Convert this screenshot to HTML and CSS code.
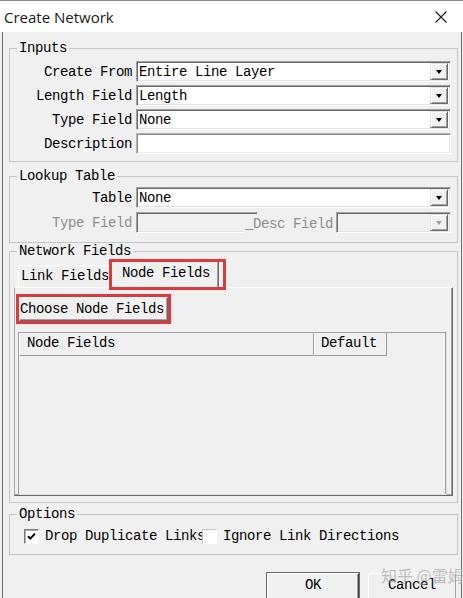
FILE: index.html
```html
<!DOCTYPE html>
<html lang="en">
<head>
    <meta charset="UTF-8">
    <title>Create Network</title>
    <link rel="stylesheet" href="styles.css">
</head>
<body>

<div class="window">
    <!-- Title bar -->
    <div class="titlebar">
        <span class="title">Create Network</span>
        <svg class="close" width="12" height="12" viewBox="0 0 12 12">
            <path d="M0.5 0.5L11.5 11.5M11.5 0.5L0.5 11.5" stroke="#1a1a1a" stroke-width="1.1" fill="none"/>
        </svg>
    </div>

    <div class="client">
        <!-- Inputs -->
        <fieldset class="group">
            <legend>Inputs</legend>
            <div class="field-grid inputs-grid">
                <label class="field-label">Create From</label>
                <div class="combo"><span class="combo-value">Entire Line Layer</span><span class="drop"></span></div>

                <label class="field-label">Length Field</label>
                <div class="combo"><span class="combo-value">Length</span><span class="drop"></span></div>

                <label class="field-label">Type Field</label>
                <div class="combo"><span class="combo-value">None</span><span class="drop"></span></div>

                <label class="field-label">Description</label>
                <div class="textbox"></div>
            </div>
        </fieldset>

        <!-- Lookup Table -->
        <fieldset class="group lookup">
            <legend>Lookup Table</legend>
            <div class="field-grid lookup-grid">
                <label class="field-label">Table</label>
                <div class="combo"><span class="combo-value">None</span><span class="drop"></span></div>

                <label class="field-label disabled">Type Field</label>
                <div class="split-row">
                    <div class="combo disabled short"></div>
                    <label class="field-label disabled desc-label"><span class="mnemonic">_</span>Desc Field</label>
                    <div class="combo disabled grow"><span class="combo-value"></span><span class="drop"></span></div>
                </div>
            </div>
        </fieldset>

        <!-- Network Fields -->
        <fieldset class="group network">
            <legend>Network Fields</legend>
            <div class="net">
                <div class="tab-strip">
                    <div class="tab">Link Fields</div>
                    <div class="tab selected">Node Fields</div>
                </div>
                <div class="tab-panel">
                    <button class="btn choose" type="button">Choose Node Fields</button>
                    <div class="listview">
                        <div class="list-header">
                            <div class="col-head col-name">Node Fields</div>
                            <div class="col-head col-default">Default</div>
                        </div>
                    </div>
                </div>
            </div>
        </fieldset>

        <!-- Options -->
        <fieldset class="group options">
            <legend>Options</legend>
            <div class="check-row">
                <span class="checkbox">
                    <svg width="9" height="9" viewBox="0 0 9 9"><path d="M1 4.2L3.3 6.6L8 1.6" stroke="#000" stroke-width="2" fill="none"/></svg>
                </span>
                <span class="check-label">Drop Duplicate Links</span>
                <span class="checkbox overlap"></span>
                <span class="check-label">Ignore Link Directions</span>
            </div>
        </fieldset>

        <div class="dialog-buttons">
            <button class="btn default" type="button">OK</button>
            <button class="btn" type="button">Cancel</button>
        </div>
    </div>

    <div class="watermark">知乎 @雷姆</div>
</div>

</body>
</html>
```

FILE: styles.css
```css
* {
    box-sizing: border-box;
}
body {
    margin: 0;
    background: #f0f0f0;
    font-family: "Liberation Mono", "DejaVu Sans Mono", monospace;
    font-size: 14px;
    letter-spacing: -0.4px;
    color: #000;
}
.window {
    position: relative;
    width: 463px;
    height: 598px;
    overflow: hidden;
}

/* title bar */
.titlebar {
    height: 32px;
    background: #fff;
    border-top: 1px solid #8a8a8a;
    display: flex;
    align-items: center;
    justify-content: space-between;
    padding: 0 16px 0 4px;
}
.title {
    font-family: "Open Sans", "Noto Sans", sans-serif;
    font-size: 15px;
    letter-spacing: 0;
    color: #1a1a1a;
}
.close {
    display: block;
}

.client {
    height: 566px;
    margin: 0 1px 0 2px;
    border-left: 1px solid #707070;
    border-right: 1px solid #707070;
    padding: 9px 3px 0 6px;
}

/* group boxes */
.group {
    margin: 0;
    padding: 0;
    min-width: 0;
    border: 1px solid #c4c4c4;
}
.group legend {
    margin-left: 7px;
    padding: 0 2px;
    line-height: 15px;
}
.lookup {
    margin-top: 7px;
}
.network {
    margin-top: 1px;
}
.options {
    margin-top: 4px;
}

.field-grid {
    display: grid;
    grid-template-columns: 122px 1fr;
    column-gap: 4px;
    align-items: center;
}
.inputs-grid {
    padding: 5px 6px 7px 0;
    row-gap: 3px;
    grid-auto-rows: 21px;
}
.lookup-grid {
    padding: 3px 6px 9px 0;
    row-gap: 4px;
    grid-auto-rows: 21px;
}
.field-label {
    text-align: right;
    white-space: nowrap;
}
.field-label.disabled {
    color: #8d8d8d;
}

/* combo boxes and text boxes */
.combo,
.textbox {
    height: 21px;
    background: #fff;
    border: 1px solid;
    border-color: #a0a0a0 #fff #fff #a0a0a0;
    box-shadow: inset 1px 1px #696969, inset -1px -1px #e3e3e3;
    display: flex;
    align-items: center;
    padding: 2px;
}
.textbox {
    border-color: #b4b4b4 #fff #fff #b4b4b4;
    box-shadow: inset 1px 1px #8a8a8a, inset -1px -1px #eaeaea;
}
.combo-value {
    flex: 1;
    white-space: nowrap;
    overflow: hidden;
}
.drop {
    width: 18px;
    height: 17px;
    background: #f0f0f0;
    border: 1px solid;
    border-color: #e3e3e3 #696969 #696969 #e3e3e3;
    box-shadow: inset 1px 1px #fff, inset -1px -1px #a0a0a0;
    display: flex;
    align-items: center;
    justify-content: center;
}
.drop::after {
    content: "";
    border-style: solid;
    border-width: 4px 3.5px 0;
    border-color: #000 transparent transparent;
}
.combo.disabled {
    background: #f0f0f0;
}
.combo.disabled .drop::after {
    border-top-color: #a0a0a0;
}

.split-row {
    display: flex;
    align-items: flex-end;
    height: 21px;
}
.combo.short {
    width: 122px;
    flex: none;
}
.desc-label {
    position: relative;
    margin-left: -14px;
    padding-left: 1px;
    height: 18px;
    line-height: 18px;
    background: #f0f0f0;
}
.mnemonic {
    color: #444;
}
.combo.grow {
    flex: 1;
    margin-left: 3px;
}

/* tabs */
.net {
    padding: 0 4px 6px 4px;
}
.tab-strip {
    height: 28px;
    display: flex;
    align-items: flex-end;
    padding-left: 4px;
}
.tab {
    height: 22px;
    line-height: 21px;
    padding: 0 2px;
    border-top: 1px solid #fff;
    border-left: 1px solid #fff;
}
.tab.selected {
    position: relative;
    height: 27px;
    margin-bottom: -1px;
    line-height: 23px;
    padding: 0 8px 0 10px;
    background: #f0f0f0;
    border-right: 1px solid #696969;
    box-shadow: inset -1px 0 #a0a0a0;
    z-index: 1;
}
.tab.selected::after {
    content: "";
    position: absolute;
    top: -3px;
    bottom: -2px;
    left: -3px;
    right: -8px;
    border: 3px solid #dc3b3e;
}
.tab-panel {
    height: 209px;
    border: 1px solid;
    border-color: #fff #696969 #696969 #a9a9a9;
    box-shadow: inset -1px -1px #a0a0a0;
    padding: 9px 5px 1px 3px;
}

/* buttons */
.btn {
    font: inherit;
    letter-spacing: inherit;
    color: #000;
    background: #f0f0f0;
    border: 1px solid;
    border-color: #fff #696969 #696969 #fff;
    box-shadow: inset -1px -1px #a0a0a0;
    padding: 0;
    border-radius: 0;
}
.choose {
    display: block;
    width: 149px;
    height: 24px;
    margin-left: 1px;
    text-align: left;
    outline: 3px solid #dc3b3e;
    white-space: nowrap;
    overflow: hidden;
}

/* list view */
.listview {
    height: 163px;
    margin-top: 11px;
    border: 1px solid;
    border-color: #a0a0a0 #e3e3e3 #e3e3e3 #a0a0a0;
    box-shadow: inset -1px 0 #a0a0a0;
}
.list-header {
    display: flex;
}
.col-head {
    height: 23px;
    line-height: 21px;
    border-right: 1px solid #9a9a9a;
    border-bottom: 1px solid #9a9a9a;
    border-left: 1px solid #fff;
}
.col-name {
    width: 295px;
    padding-left: 7px;
}
.col-default {
    width: 73px;
    padding-left: 6px;
}

/* options */
.check-row {
    display: flex;
    align-items: center;
    padding: 6px 0 10px 14px;
}
.checkbox {
    width: 15px;
    height: 15px;
    flex: none;
    background: #fff;
    border: 1px solid;
    border-color: #7a7a7a #fff #fff #7a7a7a;
    box-shadow: inset 1px 1px #b0b0b0;
    display: flex;
    align-items: center;
    justify-content: center;
}
.checkbox.overlap {
    margin-left: -3px;
    border-color: #c4c4c4 #fff #fff #c4c4c4;
    box-shadow: none;
}
.check-label {
    margin-left: 6px;
    white-space: nowrap;
}

/* dialog buttons */
.dialog-buttons {
    display: flex;
    justify-content: flex-end;
    gap: 9px;
    margin-top: 18px;
    padding-right: 2px;
}
.dialog-buttons .btn {
    height: 28px;
    padding-bottom: 4px;
}
.dialog-buttons .btn.default {
    width: 92px;
    border-color: #fff #404040 #404040 #fff;
    outline: 1px solid #6b6b6b;
}
.dialog-buttons .btn:not(.default) {
    width: 88px;
    border-color: #fff #a0a0a0 #a0a0a0 #fff;
    box-shadow: none;
}

.watermark {
    position: absolute;
    left: 381px;
    top: 563px;
    white-space: nowrap;
    font-family: "Noto Sans CJK SC", sans-serif;
    font-size: 16px;
    letter-spacing: 0;
    color: rgba(170, 170, 170, 0.75);
}
```
